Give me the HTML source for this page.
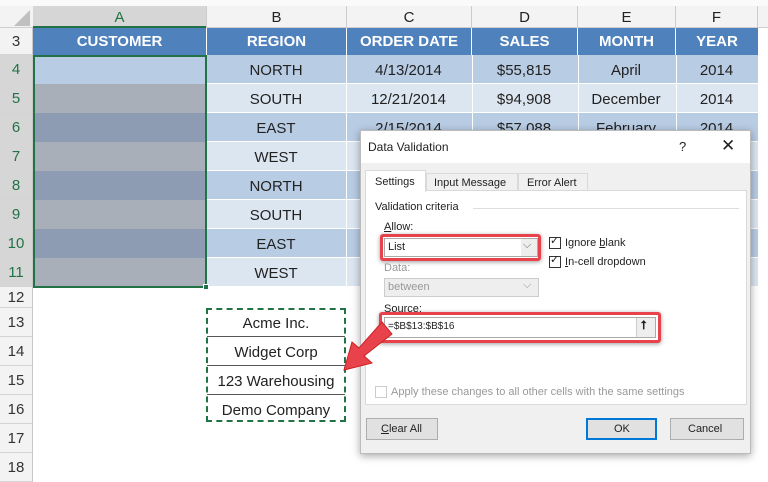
<!DOCTYPE html>
<html><head><style>
*{margin:0;padding:0;box-sizing:border-box}
body{width:768px;height:469px;overflow:hidden;background:#fff;font-family:"Liberation Sans",sans-serif;position:relative}
.a{position:absolute}
.c{position:absolute;display:flex;align-items:center;justify-content:center;font-size:15px;color:#222}
.h{color:#fff;font-weight:bold;font-size:15px;background:#4f81bd}
.rn{position:absolute;left:0;width:33px;background:#f3f3f3;border-bottom:1px solid #d4d4d4;border-right:1px solid #c8c8c8;display:flex;align-items:center;justify-content:center;font-size:15px;color:#333}
.d{font-size:11px;color:#222;position:absolute}
</style></head><body>
<div class="a" style="left:0;top:0;width:768px;height:28px;background:#f3f3f3;border-bottom:1px solid #cfcfcf"></div>
<div class="a" style="left:0;top:0;width:768px;height:6px;background:#fafafa"></div>
<div class="a" style="left:33px;top:6px;width:173px;height:22px;background:#d6d6d6;border-bottom:2px solid #217346"></div>
<svg class="a" style="left:14px;top:10px" width="16" height="16"><polygon points="16,0 16,16 0,16" fill="#c0c0c0"/></svg>
<div class="c" style="left:33px;top:6px;width:173px;height:22px;color:#217346">A</div>
<div class="c" style="left:206px;top:6px;width:140px;height:22px;border-left:1px solid #ccc">B</div>
<div class="c" style="left:346px;top:6px;width:125px;height:22px;border-left:1px solid #ccc">C</div>
<div class="c" style="left:471px;top:6px;width:106px;height:22px;border-left:1px solid #ccc">D</div>
<div class="c" style="left:577px;top:6px;width:98px;height:22px;border-left:1px solid #ccc">E</div>
<div class="c" style="left:675px;top:6px;width:83px;height:22px;border-left:1px solid #ccc;border-right:1px solid #ccc">F</div>
<div class="rn" style="top:28px;height:27px">3</div>
<div class="rn" style="top:55px;height:29px;color:#217346;background:#d6d6d6">4</div>
<div class="rn" style="top:84px;height:29px;color:#217346;background:#d6d6d6">5</div>
<div class="rn" style="top:113px;height:29px;color:#217346;background:#d6d6d6">6</div>
<div class="rn" style="top:142px;height:29px;color:#217346;background:#d6d6d6">7</div>
<div class="rn" style="top:171px;height:29px;color:#217346;background:#d6d6d6">8</div>
<div class="rn" style="top:200px;height:29px;color:#217346;background:#d6d6d6">9</div>
<div class="rn" style="top:229px;height:29px;color:#217346;background:#d6d6d6">10</div>
<div class="rn" style="top:258px;height:29px;color:#217346;background:#d6d6d6">11</div>
<div class="rn" style="top:287px;height:21px">12</div>
<div class="rn" style="top:308px;height:29px">13</div>
<div class="rn" style="top:337px;height:29px">14</div>
<div class="rn" style="top:366px;height:29px">15</div>
<div class="rn" style="top:395px;height:29px">16</div>
<div class="rn" style="top:424px;height:29px">17</div>
<div class="rn" style="top:453px;height:29px">18</div>
<div class="c h" style="left:33px;top:28px;width:173px;height:27px">CUSTOMER</div>
<div class="c h" style="left:207px;top:28px;width:139px;height:27px">REGION</div>
<div class="c h" style="left:347px;top:28px;width:124px;height:27px">ORDER DATE</div>
<div class="c h" style="left:472px;top:28px;width:105px;height:27px">SALES</div>
<div class="c h" style="left:578px;top:28px;width:97px;height:27px">MONTH</div>
<div class="c h" style="left:676px;top:28px;width:82px;height:27px">YEAR</div>
<div class="a" style="left:206px;top:55px;width:552px;height:232px;background:repeating-linear-gradient(#b8cce4 0 29px,#dce6f1 29px 58px)"></div>
<div class="a" style="left:206px;top:55px;width:552px;height:232px;background:repeating-linear-gradient(90deg,transparent 0 140px,#fff 140px 141px,transparent 141px 266px,#fff 266px 267px,transparent 267px 372px,#fff 372px 373px,transparent 373px 470px,#fff 470px 471px,transparent 471px 552px)"></div>
<div class="a" style="left:206px;top:55px;width:552px;height:232px;background:repeating-linear-gradient(transparent 0 28px,#fff 28px 29px)"></div>
<div class="a" style="left:33px;top:55px;width:173px;height:232px;background:repeating-linear-gradient(#8d9cb2 0 29px,#a9afb8 29px 58px)"></div>
<div class="a" style="left:35px;top:57px;width:170px;height:27px;background:#b8cce4"></div>
<div class="a" style="left:33px;top:55px;width:174px;height:233px;border:2px solid #217346"></div>
<div class="a" style="left:203px;top:284px;width:6px;height:6px;background:#217346;border:1px solid #fff"></div>
<div class="c" style="left:206px;top:56px;width:140px;height:29px">NORTH</div>
<div class="c" style="left:206px;top:85px;width:140px;height:29px">SOUTH</div>
<div class="c" style="left:206px;top:114px;width:140px;height:29px">EAST</div>
<div class="c" style="left:206px;top:143px;width:140px;height:29px">WEST</div>
<div class="c" style="left:206px;top:172px;width:140px;height:29px">NORTH</div>
<div class="c" style="left:206px;top:201px;width:140px;height:29px">SOUTH</div>
<div class="c" style="left:206px;top:230px;width:140px;height:29px">EAST</div>
<div class="c" style="left:206px;top:259px;width:140px;height:29px">WEST</div>
<div class="c" style="left:346px;top:56px;width:125px;height:29px">4/13/2014</div>
<div class="c" style="left:346px;top:85px;width:125px;height:29px">12/21/2014</div>
<div class="c" style="left:346px;top:114px;width:125px;height:29px">2/15/2014</div>
<div class="c" style="left:471px;top:56px;width:106px;height:29px">$55,815</div>
<div class="c" style="left:471px;top:85px;width:106px;height:29px">$94,908</div>
<div class="c" style="left:471px;top:114px;width:106px;height:29px">$57,088</div>
<div class="c" style="left:577px;top:56px;width:98px;height:29px">April</div>
<div class="c" style="left:577px;top:85px;width:98px;height:29px">December</div>
<div class="c" style="left:577px;top:114px;width:98px;height:29px">February</div>
<div class="c" style="left:675px;top:56px;width:83px;height:29px">2014</div>
<div class="c" style="left:675px;top:85px;width:83px;height:29px">2014</div>
<div class="c" style="left:675px;top:114px;width:83px;height:29px">2014</div>
<div class="a" style="left:206px;top:308px;width:140px;height:114px;border:2px dashed #217346"></div>
<div class="a" style="left:207px;top:336px;width:138px;height:1px;background:#555"></div>
<div class="a" style="left:207px;top:365px;width:138px;height:1px;background:#555"></div>
<div class="a" style="left:207px;top:394px;width:138px;height:1px;background:#555"></div>
<div class="c" style="left:206px;top:309px;width:140px;height:29px">Acme Inc.</div>
<div class="c" style="left:206px;top:338px;width:140px;height:29px">Widget Corp</div>
<div class="c" style="left:206px;top:367px;width:140px;height:29px">123 Warehousing</div>
<div class="c" style="left:206px;top:396px;width:140px;height:29px">Demo Company</div>
<div class="a" style="left:360px;top:130px;width:391px;height:324px;background:#f0f0f0;border:1px solid #bbb;box-shadow:0 2px 8px rgba(0,0,0,.35)"></div>
<div class="a" style="left:361px;top:131px;width:389px;height:32px;background:#fff"></div>
<div class="d" style="left:368px;top:140px;font-size:12px">Data Validation</div>
<div class="d" style="left:679px;top:139px;font-size:13px">?</div>
<div class="d" style="left:721px;top:136px;font-size:17px">✕</div>
<div class="a" style="left:365px;top:190px;width:382px;height:215px;background:#fff;border:1px solid #d9d9d9"></div>
<div class="a" style="left:365px;top:170px;width:61px;height:22px;background:#fff;border:1px solid #d9d9d9;border-bottom:none"></div>
<div class="a" style="left:426px;top:173px;width:92px;height:18px;border:1px solid #d9d9d9;border-bottom:none"></div>
<div class="a" style="left:518px;top:173px;width:70px;height:18px;border:1px solid #d9d9d9;border-bottom:none"></div>
<div class="d" style="left:375px;top:176px">Settings</div>
<div class="d" style="left:434px;top:177px">Input Message</div>
<div class="d" style="left:527px;top:177px">Error Alert</div>
<div class="d" style="left:375px;top:201px">Validation criteria</div>
<div class="a" style="left:473px;top:208px;width:266px;height:1px;background:#ddd"></div>
<div class="d" style="left:384px;top:221px"><u>A</u>llow:</div>
<div class="a" style="left:380px;top:234px;width:161px;height:27px;border:3px solid #e8434d;border-radius:3px;box-shadow:0 1px 4px rgba(0,0,0,.4)"></div>
<div class="a" style="left:384px;top:238px;width:154px;height:19px;background:#fff;border:1px solid #aaa"></div>
<div class="a" style="left:521px;top:239px;width:16px;height:17px;background:#eee"></div>
<div class="d" style="left:388px;top:241px">List</div>
<div class="d" style="left:523px;top:239px;color:#666">⌵</div>
<div class="a" style="left:549px;top:237px;width:12px;height:12px;border:1px solid #333;background:#fff"></div>
<div class="d" style="left:550px;top:234px;font-size:11px">✓</div>
<div class="d" style="left:565px;top:237px">Ignore <u>b</u>lank</div>
<div class="a" style="left:549px;top:256px;width:12px;height:12px;border:1px solid #333;background:#fff"></div>
<div class="d" style="left:550px;top:253px;font-size:11px">✓</div>
<div class="d" style="left:565px;top:256px"><u>I</u>n-cell dropdown</div>
<div class="d" style="left:384px;top:262px;color:#999">Data:</div>
<div class="a" style="left:384px;top:278px;width:155px;height:19px;background:#eee;border:1px solid #ccc"></div>
<div class="d" style="left:388px;top:281px;color:#999">between</div>
<div class="d" style="left:523px;top:279px;color:#999">⌵</div>
<div class="d" style="left:384px;top:303px">Source:</div>
<div class="a" style="left:379px;top:312px;width:282px;height:31px;border:3px solid #e8434d;border-radius:3px;box-shadow:0 1px 4px rgba(0,0,0,.4)"></div>
<div class="a" style="left:384px;top:317px;width:272px;height:21px;background:#fff;border:1px solid #aaa"></div>
<div class="a" style="left:636px;top:318px;width:19px;height:19px;background:#eee;border-left:1px solid #ccc"></div>
<div class="d" style="left:641px;top:318px;font-size:12px;font-weight:bold">⭡</div>
<div class="d" style="left:388px;top:321px;font-size:10px">=$B$13:$B$16</div>
<div class="a" style="left:375px;top:386px;width:12px;height:12px;border:1px solid #ccc;background:#fff"></div>
<div class="d" style="left:391px;top:386px;color:#999">Apply these changes to all other cells with the same settings</div>
<div class="a" style="left:366px;top:418px;width:72px;height:22px;background:#e1e1e1;border:1px solid #adadad"></div>
<div class="d" style="left:381px;top:423px"><u>C</u>lear All</div>
<div class="a" style="left:586px;top:418px;width:71px;height:22px;background:#e1e1e1;border:2px solid #0078d7"></div>
<div class="d" style="left:614px;top:423px">OK</div>
<div class="a" style="left:670px;top:418px;width:74px;height:22px;background:#e1e1e1;border:1px solid #adadad"></div>
<div class="d" style="left:688px;top:423px">Cancel</div>
<svg class="a" style="left:330px;top:310px" width="70" height="75"><polygon points="52,12 62,24 34,46 42,53 14,60 22,32 29,38" fill="#e8434d" stroke="#c22" stroke-width="1"/></svg>
</body></html>
